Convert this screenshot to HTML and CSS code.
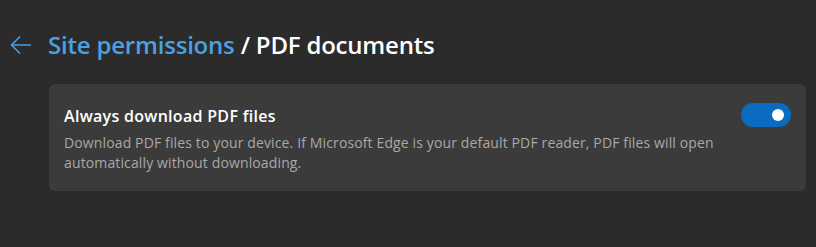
FILE: index.html
```html
<!DOCTYPE html>
<html>
<head>
<meta charset="utf-8">
<link rel="stylesheet" href="styles.css">
</head>
<body>
<div class="page">
  <header class="header">
    <button class="back" aria-label="Back">
      <svg width="22" height="20" viewBox="0 0 22 20"><path d="M21 10H2M10 1.5L1.5 10L10 18.5" fill="none" stroke="#4a9de0" stroke-width="1.6"/></svg>
    </button>
    <h1 class="title"><span class="crumb">Site permissions</span> / PDF documents</h1>
  </header>
  <section class="card">
    <div class="card-text">
      <div class="card-title">Always download PDF files</div>
      <div class="card-desc">Download PDF files to your device. If Microsoft Edge is your default PDF reader, PDF files will open automatically without downloading.</div>
    </div>
    <div class="toggle on"><span class="knob"></span></div>
  </section>
</div>
</body>
</html>
```
FILE: styles.css
```css
html, body {
  margin: 0;
  padding: 0;
  background: #2b2b2b;
  font-family: "Open Sans", "Noto Sans", sans-serif;
}
.page {
  width: 816px;
  height: 247px;
  padding-top: 27px;
  box-sizing: border-box;
}
.header {
  display: flex;
  align-items: center;
  height: 36px;
}
.back {
  background: none;
  border: 0;
  padding: 0;
  margin-left: 10px;
  width: 22px;
  height: 20px;
  display: flex;
}
.title {
  margin: 0 0 0 16px;
  font-size: 24px;
  font-weight: 600;
  color: #ffffff;
  letter-spacing: -0.2px;
  line-height: 36px;
}
.crumb {
  color: #4ca0e2;
}
.card {
  margin: 21px 10px 0 49px;
  background: #3b3b3b;
  border-radius: 6px;
  height: 107px;
  box-sizing: border-box;
  padding: 21px 15px 0 15px;
  display: flex;
  justify-content: space-between;
  align-items: flex-start;
}
.card-text {
  width: 670px;
}
.card-title {
  font-size: 16px;
  font-weight: 600;
  color: #ffffff;
  line-height: 22px;
  letter-spacing: 0.3px;
}
.card-desc {
  margin-top: 6px;
  font-size: 14px;
  color: #a8a8a8;
  line-height: 20px;
  letter-spacing: 0.13px;
}
.toggle {
  width: 50px;
  height: 24px;
  border-radius: 12px;
  background: #0a6cc0;
  position: relative;
  margin-top: -2px;
  flex: none;
}
.knob {
  position: absolute;
  width: 12px;
  height: 12px;
  border-radius: 50%;
  background: #ffffff;
  top: 6px;
  right: 7px;
}
```
